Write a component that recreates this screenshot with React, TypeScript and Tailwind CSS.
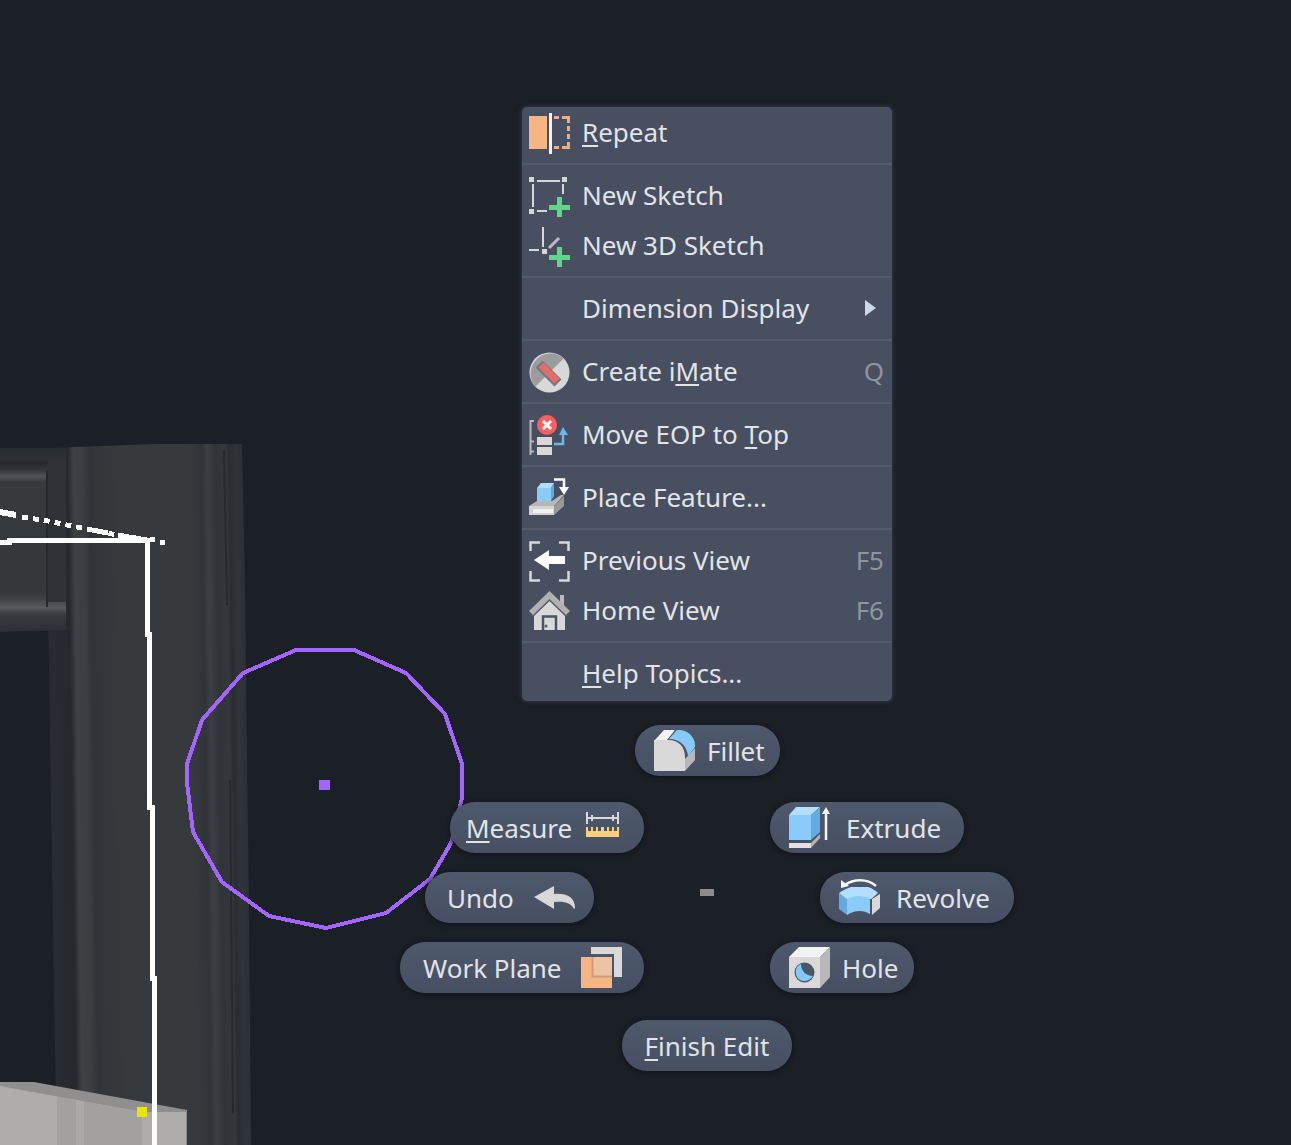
import React from 'react';

type IconProps = { children: React.ReactNode };

function Glyph({ children }: IconProps) {
  return (
    <svg className="w-[41px] h-[41px] shrink-0" viewBox="0 0 41 41" fill="none" aria-hidden="true">
      {children}
    </svg>
  );
}

const PlusBadge = () => <path d="M28 21h5v8h8v5h-8v7h-5v-7h-8v-5h8z" fill="#5fd68a" />;

const MirrorIcon = () => (
  <Glyph>
    <path d="M0 3h18v33H0z" fill="#f7b585" />
    <path d="M20 0h3v41h-3z" fill="#f1f2f4" />
    <path d="M25 3h5v3h-5zM33 3h8v7h-3V6h-5zM38 13h3v5h-3zM38 21h3v5h-3zM38 29h3v7h-8v-3h5zM25 33h5v3h-5z" fill="#f0ae80" />
  </Glyph>
);

const SketchIcon = () => (
  <Glyph>
    <path d="M0 1h5v5H0zM33 1h5v5h-5zM0 33h5v5H0zM8 4h23v2H8zM3 8h2v23H3zM8 34h10v2H8zM33 8h2v10h-2z" fill="#d6d7d9" />
    <PlusBadge />
  </Glyph>
);

const Sketch3DIcon = () => (
  <Glyph>
    <path d="M13 1h2v20h-2zM0 23h10v2H0zM13 23h5v5h-5z" fill="#d6d7d9" />
    <path d="M20 22 30 12" stroke="#b9bcc1" strokeWidth="3" />
    <PlusBadge />
  </Glyph>
);

const IMateIcon = () => (
  <Glyph>
    <circle cx="20.5" cy="20.5" r="20" fill="#d8d8d8" />
    <path d="M6.400 34.600A20 20 0 0 1 34.600 6.400z" fill="#9c9c9c" />
    <path d="m10 12 19 19" stroke="#77787c" strokeWidth="10" />
    <path d="m12 13 16 16" stroke="#e66b6b" strokeWidth="7" />
  </Glyph>
);

const EopIcon = () => (
  <Glyph>
    <path d="M5 6H1.500v34M1 26.500h4M1 36.500h4" stroke="#b8babd" strokeWidth="2" />
    <path d="M8 22h15v8H8zM8 32h15v8H8z" fill="#d8d8d8" />
    <circle cx="18" cy="10" r="10" fill="#f95f62" />
    <path d="m14 6 8 8m0-8-8 8" stroke="#fff" strokeWidth="3" />
    <path d="M25 29h9V18" stroke="#6db5ee" strokeWidth="2.500" />
    <path d="m34 12 5 8h-9z" fill="#6db5ee" />
  </Glyph>
);

const PlaceIcon = () => (
  <Glyph>
    <path d="m0 28 8-5h15l9-6h3l-10 11z" fill="#b8b8b8" />
    <path d="M0 28h25v9H0z" fill="#d3d3d3" />
    <path d="M25 28 35 18v10l-10 9z" fill="#999" />
    <path d="M4 31h20v4H4z" fill="#f2f2f2" />
    <path d="M8 10h14v13H8z" fill="#89cbf9" />
    <path d="m8 10 4-5h13l-3 5z" fill="#b3ddfb" />
    <path d="m22 10 3-5v13l-3 5z" fill="#5fa9e0" />
    <path d="M25 1.500h10V9" stroke="#fff" strokeWidth="2.500" />
    <path d="M30 9h10l-5 8z" fill="#fff" />
  </Glyph>
);

const PreviousIcon = () => (
  <Glyph>
    <path d="M1.500 10V1.500H11M30 1.500h9.500V10M39.500 30v9.500H30M11 39.500H1.500V30" stroke="#d8d9dc" strokeWidth="2.500" />
    <path d="m5 19 15-10v6h16v8H20v6z" fill="#fff" />
  </Glyph>
);

const HomeIcon = () => (
  <Glyph>
    <path d="M31 4h4v12l-4-4z" fill="#b9b9b9" />
    <path d="M20.500 10 36 25v14H5V25z" fill="#d9d9d9" />
    <path d="m3 25 17.500-17L38 25" stroke="#5d6472" strokeWidth="1.500" />
    <path d="M20.500 0 41 20l-4 4L20.500 8 4 24l-4-4z" fill="#b1b1b1" />
    <path d="M14 39V25.500h13V39" stroke="#4b5466" strokeWidth="2.500" />
    <circle cx="17" cy="35" r="1.500" fill="#555c68" />
  </Glyph>
);

const FilletIcon = () => (
  <Glyph>
    <path d="M31 29 41 18v12L31 41z" fill="#b8b8b8" />
    <path d="M0 11 10 0h11l-8 10z" fill="#f3f3f3" />
    <path d="M0 10h14c11 0 17 7 17 17v14H0z" fill="#d9d9d9" />
    <path d="M15 9 23 0c10-1 19 7 18 17l-7 9C33 16 26 9 15 9z" fill="#86cafb" />
  </Glyph>
);

const MeasureIcon = () => (
  <Glyph>
    <path d="M4 5v12M35 5v12M4 11h31M9 8v6M30 8v6" stroke="#d8d9dc" strokeWidth="2" />
    <path d="M3 20h2v4h3v-4h2v4h3v-4h2v4h3v-4h3v4h3v-4h2v4h3v-4h2v4h3v-4h2v10H3z" fill="#fccf7b" />
  </Glyph>
);

const UndoIcon = () => (
  <Glyph>
    <path d="M0 20 20 9v8c12-1 21 3 21 14l-1 1c-3-6-9-8-20-7v7z" fill="#d8d8d8" />
  </Glyph>
);

const PlaneIcon = () => (
  <Glyph>
    <path d="M10 0h31v30h-8V7H10z" fill="#d9d9d9" />
    <path d="M0 10h31v31H0z" fill="#f7b585" />
    <path d="M11 10h20v20H11z" fill="#edc3a3" />
    <path d="M11.500 10v19.500H31" stroke="#cd9b78" strokeWidth="2" />
  </Glyph>
);

const ExtrudeIcon = () => (
  <Glyph>
    <path d="M0 8h22v25H0z" fill="#89cbfb" />
    <path d="m0 8 7-8h24l-9 8z" fill="#b3defd" />
    <path d="m22 8 9-8v25l-9 8z" fill="#62aadf" />
    <path d="M0 36h22v5H0z" fill="#e3e1df" />
    <path d="m22 36 9-9v4l-9 10z" fill="#b6b5b4" />
    <path d="M37 33V5" stroke="#f5f5f5" strokeWidth="2.500" />
    <path d="m37 0 4 7h-8z" fill="#f5f5f5" />
  </Glyph>
);

const RevolveIcon = () => (
  <Glyph>
    <path d="M6 8C14 2 28 1 37 9" stroke="#f5f5f5" strokeWidth="2.500" />
    <path d="M2 3v8l8-2z" fill="#f5f5f5" />
    <path d="M33 22 41 17v14l-8 7z" fill="#d9d9d9" />
    <path d="M0 16 8 22v16l-8-6z" fill="#62aadf" />
    <path d="M0 16C4 13 9 11 12 10h17c4 1 8 4 10 6l-8 7c-7-4-15-4-22 0z" fill="#b3defd" />
    <path d="M8 22c8-4 16-4 23 0v15c-7-4-15-4-23 1z" fill="#89cbfb" />
    <path d="M32 22v16" stroke="#4c5669" strokeWidth="2" />
  </Glyph>
);

const HoleIcon = () => (
  <Glyph>
    <path d="M0 10h31v31H0z" fill="#d9d9d9" />
    <path d="m0 10 10-10h31L31 10z" fill="#f3f3f3" />
    <path d="M31 10 41 0v30L31 41z" fill="#b8b8b8" />
    <circle cx="15.500" cy="25.500" r="10" fill="#4b5568" />
    <path d="M12 17c0 7 5 12 12 12-5 8-16 6-17-2-1-5 1-8 5-10z" fill="#85c8f8" />
  </Glyph>
);

type Item = {
  label: string;
  accessKey?: number;
  icon?: React.ReactNode;
  shortcut?: string;
  submenu?: boolean;
};

const groups: Item[][] = [
  [{ label: 'Repeat', accessKey: 0, icon: <MirrorIcon /> }],
  [
    { label: 'New Sketch', icon: <SketchIcon /> },
    { label: 'New 3D Sketch', icon: <Sketch3DIcon /> },
  ],
  [{ label: 'Dimension Display', submenu: true }],
  [{ label: 'Create iMate', accessKey: 8, icon: <IMateIcon />, shortcut: 'Q' }],
  [{ label: 'Move EOP to Top', accessKey: 12, icon: <EopIcon /> }],
  [{ label: 'Place Feature...', icon: <PlaceIcon /> }],
  [
    { label: 'Previous View', icon: <PreviousIcon />, shortcut: 'F5' },
    { label: 'Home View', icon: <HomeIcon />, shortcut: 'F6' },
  ],
  [{ label: 'Help Topics...', accessKey: 0 }],
];

// Label with the access key letter underlined
function Label({ text, accessKey }: { text: string; accessKey?: number }) {
  if (accessKey === undefined) return <span className="whitespace-pre">{text}</span>;
  return (
    <span className="whitespace-pre">
      {text.slice(0, accessKey)}
      <span className="underline decoration-2 underline-offset-3 [text-decoration-skip-ink:none]">{text[accessKey]}</span>
      {text.slice(accessKey + 1)}
    </span>
  );
}

function ContextMenu() {
  return (
    <div role="menu" className="absolute left-[522px] top-[107px] w-[370px] pb-[3px] rounded-[5px] bg-[#474f61] shadow-[0_0_4px_1px_#303744]">
      {groups.map((group, i) => (
        <div key={i} className={i > 0 ? 'border-t-2 border-[#535c6d] pt-[5px] mt-[6px]' : ''}>
          {group.map((item) => (
            <button
              key={item.label}
              role="menuitem"
              className="flex items-center w-full h-[50px] pl-[7px] pr-2 text-left hover:bg-[#55607a]"
            >
              <span className="w-[53px] pt-0.5 shrink-0">{item.icon}</span>
              <Label text={item.label} accessKey={item.accessKey} />
              {item.shortcut && <span className="ml-auto text-[#8f949e]">{item.shortcut}</span>}
              {item.submenu && (
                <svg className="ml-auto mr-2 w-[11px] h-4" viewBox="0 0 11 16" aria-hidden="true">
                  <path d="M0 0 11 8 0 16z" fill="#ccd9ea" />
                </svg>
              )}
            </button>
          ))}
        </div>
      ))}
    </div>
  );
}

const pill =
  'absolute flex items-center h-[51px] rounded-[25px] bg-gradient-to-b from-[#4e596b] to-[#474f63] shadow-[0_1px_4px_1px_#12161c] hover:brightness-110';

function MarkingMenu() {
  return (
    <>
      <button className={`${pill} left-[635px] top-[725px] w-[145px] pl-[19px] gap-3`}>
        <FilletIcon />
        <Label text="Fillet" />
      </button>
      <button className={`${pill} left-[450px] top-[802px] w-[194px] pl-4`}>
        <Label text="Measure" accessKey={0} />
        <span className="ml-auto mr-5"><MeasureIcon /></span>
      </button>
      <button className={`${pill} left-[425px] top-[872px] w-[169px] pl-[22px]`}>
        <Label text="Undo" />
        <span className="ml-auto mr-[19px]"><UndoIcon /></span>
      </button>
      <button className={`${pill} left-[400px] top-[942px] w-[244px] pl-[23px]`}>
        <Label text="Work Plane" />
        <span className="ml-auto mr-[22px]"><PlaneIcon /></span>
      </button>
      <button className={`${pill} left-[770px] top-[802px] w-[194px] pl-[19px] gap-4`}>
        <ExtrudeIcon />
        <Label text="Extrude" />
      </button>
      <button className={`${pill} left-[820px] top-[872px] w-[194px] pl-[19px] gap-4`}>
        <RevolveIcon />
        <Label text="Revolve" />
      </button>
      <button className={`${pill} left-[770px] top-[942px] w-[144px] pl-[19px] gap-3`}>
        <HoleIcon />
        <Label text="Hole" />
      </button>
      <button className={`${pill} left-[622px] top-[1020px] w-[170px] justify-center`}>
        <Label text="Finish Edit" accessKey={0} />
      </button>
    </>
  );
}

// Part geometry and sketch lines behind the menus
function Viewport() {
  return (
    <svg className="absolute inset-0 w-full h-full" aria-hidden="true">
      <defs>
        <linearGradient id="post" x1="43" x2="243" y1="0" y2="0" gradientUnits="userSpaceOnUse" gradientTransform="skewX(0.8)">
          <stop offset="0" stopColor="#282c30" />
          <stop offset="0.09" stopColor="#25292e" />
          <stop offset="0.12" stopColor="#3e4245" />
          <stop offset="0.17" stopColor="#3a3e41" />
          <stop offset="0.2" stopColor="#303438" />
          <stop offset="0.27" stopColor="#34383b" />
          <stop offset="0.36" stopColor="#363a3d" />
          <stop offset="0.7" stopColor="#363a3d" />
          <stop offset="0.76" stopColor="#303438" />
          <stop offset="0.79" stopColor="#3c4043" />
          <stop offset="0.83" stopColor="#303438" />
          <stop offset="0.88" stopColor="#34383b" />
          <stop offset="0.9" stopColor="#292d31" />
          <stop offset="0.93" stopColor="#313539" />
          <stop offset="1" stopColor="#282c31" />
        </linearGradient>
        <linearGradient id="rail" x1="0" x2="0" y1="444" y2="634" gradientUnits="userSpaceOnUse">
          <stop offset="0" stopColor="#252a2e" />
          <stop offset="0.08" stopColor="#2e3236" />
          <stop offset="0.1" stopColor="#24282c" />
          <stop offset="0.14" stopColor="#34383b" />
          <stop offset="0.17" stopColor="#505456" />
          <stop offset="0.2" stopColor="#363a3d" />
          <stop offset="0.78" stopColor="#34383b" />
          <stop offset="0.82" stopColor="#404447" />
          <stop offset="0.86" stopColor="#585b5d" />
          <stop offset="0.9" stopColor="#36393d" />
          <stop offset="1" stopColor="#2b2f33" />
        </linearGradient>
      </defs>
      <path d="M48 448 157 444h85l3 140 4 330 2 231H57l-3-150-6-390z" fill="url(#post)" />
      <path d="M0 448h66v182L0 632z" fill="url(#rail)" />
      <path d="M48 460h18v142H48z" fill="#2f3337" />
      <path d="M46 470h2v137h-2zM223 450l3 155h2l-3-155zM229 780l3 334h2l-3-334z" fill="#26292e" />
      <path d="M0 1082h34l153 28v35H0z" fill="#918f8d" />
      <path d="M0 1086 142 1112h44v33H0z" fill="#afadab" />
      <path d="M57 1097 142 1112v33H57z" fill="#a3a19f" />
      <path d="m76 1100 8 2v43h-8z" fill="#adabaa" />

      <g fill="none" stroke="#fff" strokeWidth="5" shapeRendering="crispEdges">
        <path d="M0 542h9v-2h138v94h2.500v173h2.500v171h2.500v167" />
        <path d="m0 512 16 3" strokeWidth="6" />
        <path d="m22 517 26 4 24 5 40 8 35 6" strokeDasharray="6 5" />
        <path d="m92 530 16 3m10 2 28 5" />
      </g>
      <path d="M150 537h5v5h-5zM160 540h5v5h-5z" fill="#fff" />
      <path d="M137 1107h10v10h-10z" fill="#e6e600" />
      <path
        d="m296 650h58l52 23 39 41 17 50v34l-11 45-21 36-44 34-60 15-57-12-47-34-29-50-6-49v-19l15-44 41-47z"
        fill="none"
        stroke="#a464ff"
        strokeWidth="4"
        shapeRendering="crispEdges"
      />
      <path d="M319 780h11v10h-11z" fill="#a464ff" />
      <path d="M700 889h14v7h-14z" fill="#8b8c8e" />
    </svg>
  );
}

export default function App() {
  return (
    <main className="relative min-h-screen overflow-hidden bg-[#1b1f26] font-['Noto_Sans','DejaVu_Sans',sans-serif] text-[26px] leading-8 text-[#e1e4e8]">
      <Viewport />
      <ContextMenu />
      <MarkingMenu />
    </main>
  );
}
